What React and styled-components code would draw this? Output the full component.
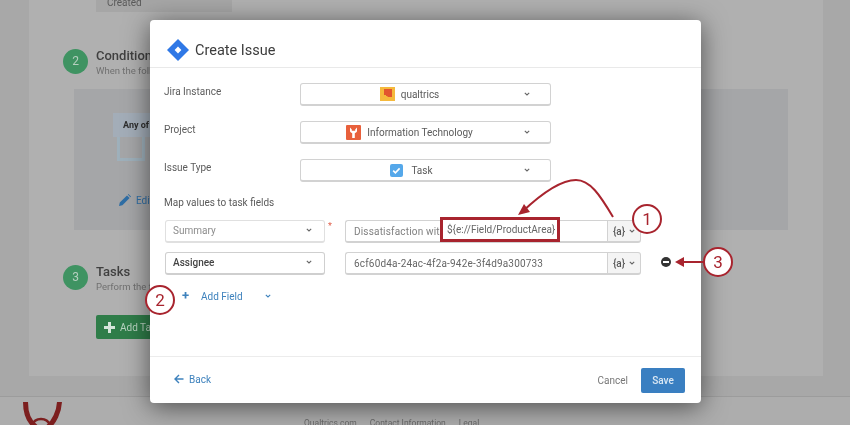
import React from "react";
import styled, { createGlobalStyle } from "styled-components";

const Global = createGlobalStyle`
  html, body { margin: 0; padding: 0; background: #a7a7a7; }
  * { box-sizing: border-box; }
  body { font-family: Roboto, "Liberation Sans", sans-serif; }
`;

const Page = styled.div`
  position: relative; width: 850px; height: 425px; overflow: hidden; background: #a8a8a8;
  filter: blur(0.5px);
`;
const Panel = styled.main`
  width: 794px; height: 376px; margin-left: 29px; padding: 0 35px 0 34px; background: #b0b0b0;
  display: flex; flex-direction: column;
`;
const CreatedBox = styled.div`
  width: 136px; height: 12px; margin-left: 33px; background: #a6a6a6; color: #5a5a5a;
  font-size: 10px; line-height: 5px; padding-left: 11px; overflow: hidden;
`;
const StepRow = styled.div`
  display: flex; gap: 8px; align-items: center; height: 26px; margin-top: ${p => p.$top}px;
`;
const StepCircle = styled.div`
  width: 25px; height: 25px; border-radius: 50%; background: #3f9362; color: #b6cfbf;
  font-size: 12px; display: flex; align-items: center; justify-content: center;
`;
const StepText = styled.div`
  display: flex; flex-direction: column; gap: 2px; padding-top: 4px; width: 54px;
  overflow: hidden; white-space: nowrap;
`;
const StepTitle = styled.div`font-size: 13px; font-weight: 500; line-height: 14px; color: #404040;`;
const StepSub = styled.div`font-size: 9.5px; line-height: 12px; color: #707070;`;
const ConditionBox = styled.div`
  width: 714px; height: 141px; margin: 15px 0 0 11px; padding: 24px 0 0 39px; background: #a5a6a8;
`;
const LogicHead = styled.div`
  width: 120px; height: 24px; padding-left: 10px; background: #a3adb8; color: #2e2e2e;
  font-size: 9px; font-weight: 700; line-height: 24px;
`;
const LogicTree = styled.div`
  width: 28px; height: 24px; margin-left: 4px; border: 3px solid #9eb0bb; border-top: 0;
`;
const EditLink = styled.div`
  display: flex; align-items: center; gap: 5px; margin: 33px 0 0 6px; color: #2f6ea5; font-size: 10px;
`;
const AddTask = styled.div`
  width: 90px; height: 24px; margin: 25px 0 0 33px; padding-left: 8px; border-radius: 2px;
  display: flex; align-items: center; gap: 5px; background: #2f7d49; color: #b9d3c1; font-size: 10px;
`;
const FooterBar = styled.footer`
  height: 29px; margin-top: 20px; border-top: 1px solid #9c9c9c; background: #adadad;
  position: relative; padding: 21px 0 0 304px; display: flex; gap: 13px;
  color: #6a6a6a; font-size: 8.5px;
`;
const FooterLogo = styled.svg`position: absolute; left: 21px; top: 5px;`;

const Modal = styled.section`
  position: absolute; left: 150px; top: 20px; width: 551px; height: 383px;
  background: #fff; border-radius: 4px; box-shadow: 0 4px 26px rgba(0,0,0,.55);
  display: flex; flex-direction: column; color: #555;
`;
const ModalHead = styled.header`
  height: 48px; flex: none; padding: 13px 0 0 16px; border-bottom: 1px solid #e9e9e9;
  display: flex; align-items: center; gap: 5px;
`;
const ModalTitle = styled.h1`margin: 0; font-size: 14.5px; font-weight: 400; color: #3c3c3c;`;
const ModalBody = styled.div`flex: 1; padding: 15px 0 0 14px; position: relative;`;
const ConfigRow = styled.div`
  display: grid; grid-template-columns: 136px 251px; height: 23px; margin-bottom: 15px;
`;
const FieldLabel = styled.div`font-size: 10px; line-height: 17px; color: #5c5c5c;`;
const baseControl = `
  background: #fff; border: 1px solid #d2d2d2; border-bottom-width: 2px; border-radius: 3px;
  font-size: 10px; color: #5a5a5a; display: flex; align-items: center;
`;
const Select = styled.div`
  ${baseControl} position: relative; justify-content: center; gap: ${p => p.$gap || 6}px; padding-right: ${p => p.$pr}px;
`;
const Chevron = styled.svg`
  flex: none; ${p => p.$abs ? `position: absolute; right: ${p.$abs}px; top: 50%; margin-top: -2px;` : ""}
`;
const MapTitle = styled.div`font-size: 10px; line-height: 12px; color: #5a5a5a; margin: 0 0 11px;`;
const MapRow = styled.div`
  display: flex; height: 23px; margin-bottom: ${p => p.$mb || 0}px; align-items: stretch;
`;
const FieldSelect = styled.div`
  ${baseControl} width: 160px; padding: 0 12px 2px 7px; margin-left: 1px; justify-content: space-between;
  color: ${p => p.$muted ? "#8c8c8c" : "#444"}; font-weight: ${p => p.$muted ? 400 : 500};
  border-color: ${p => p.$muted ? "#e0e0e0" : "#cfcfcf"};
`;
const Required = styled.span`width: 20px; color: #e0604c; font-size: 9px; padding-left: 3px; line-height: 12px;`;
const ValueInput = styled.div`
  ${baseControl} width: 262px; padding: 0 8px; border-radius: 3px 0 0 3px; border-right: 0;
  color: ${p => p.$muted ? "#808080" : "#666"}; letter-spacing: .18px; white-space: nowrap;
`;
const PipeButton = styled.div`
  ${baseControl} width: 34px; justify-content: center; gap: 4px; background: #f4f4f4;
  border-radius: 0 3px 3px 0; color: #555; font-weight: 500; font-size: 10px;
`;
const Removal = styled.div`
  width: 10px; height: 10px; margin: 5px 0 0 20px; border-radius: 50%; background: #333;
  display: flex; align-items: center; justify-content: center;
  &::after { content: ""; width: 6px; height: 2px; background: #fff; }
`;
const AddFieldRow = styled.div`
  display: flex; align-items: center; height: 14px; margin: 14px 0 0 17px; color: #3e82bd; font-size: 10px;
`;
const Plus = styled.span`width: 20px; padding-left: 1px; font-size: 13px; font-weight: 700; line-height: 14px;`;
const AddText = styled.span`width: 64px;`;
const ModalFoot = styled.footer`
  height: 47px; flex: none; border-top: 1px solid #ececec; padding: 0 16px 0 24px;
  display: flex; align-items: center; gap: 13px;
`;
const BackLink = styled.div`
  display: flex; align-items: center; gap: 5px; margin: 0 auto 2px 0; color: #3e82bd; font-size: 10px;
`;
const Cancel = styled.span`font-size: 10px; color: #777;`;
const SaveButton = styled.button`
  width: 44px; height: 25px; border: 0; border-radius: 2px; background: #3a7fc1; color: #dbe8f4;
  font: 500 10px Roboto, sans-serif; padding: 0;
`;

const Highlight = styled.div`
  position: absolute; left: 440px; top: 217px; width: 120px; height: 25px; padding-left: 4px;
  border: 3px solid #a8242e; background: #fff; color: #666; font-size: 10px; line-height: 20px;
  white-space: nowrap;
`;
const Callout = styled.div`
  position: absolute; left: ${p => p.$x - 15}px; top: ${p => p.$y - 15}px; width: 30px; height: 30px;
  border-radius: 50%; border: 2.5px solid #a8242e; background: #fff; color: #a8242e;
  font-size: 17px; display: flex; align-items: center; justify-content: center;
`;
const ArrowLayer = styled.svg`position: absolute; left: 0; top: 0; pointer-events: none;`;

const Chev = ({ abs, color = "#666" }) => (
  <Chevron $abs={abs} width="6" height="4" viewBox="0 0 6 4">
    <path d="M.8.8L3 3l2.2-2.2" fill="none" stroke={color} strokeWidth="1.1" />
  </Chevron>
);

export default function App() {
  return (
    <Page>
      <Global />
      <Panel>
        <CreatedBox>Created</CreatedBox>
        <StepRow $top={36}>
          <StepCircle>2</StepCircle>
          <StepText><StepTitle>Conditions</StepTitle><StepSub>When the following</StepSub></StepText>
        </StepRow>
        <ConditionBox>
          <LogicHead>Any of</LogicHead>
          <LogicTree />
          <EditLink>
            <svg width="12" height="12" viewBox="0 0 12 12"><path d="M0 12l.8-3.4L8 1.4l2.6 2.6-7.2 7.2zM8.8.6l.6-.6L12 2.6l-.6.6z" fill="#2f6ea5" /></svg>
            Edit
          </EditLink>
        </ConditionBox>
        <StepRow $top={34}>
          <StepCircle>3</StepCircle>
          <StepText><StepTitle>Tasks</StepTitle><StepSub>Perform the following</StepSub></StepText>
        </StepRow>
        <AddTask>
          <svg width="11" height="11" viewBox="0 0 11 11"><path d="M4 0h3v4h4v3H7v4H4V7H0V4h4z" fill="#d5e5da" /></svg>
          Add Task
        </AddTask>
      </Panel>
      <FooterBar>
        <FooterLogo width="42" height="24" viewBox="0 0 42 24">
          <path d="M4.5 0C4.5 11 8 20 15 25M38.5 0C38 10 33 20 27 25" fill="none" stroke="#7c1f1f" strokeWidth="5" />
          <path d="M11 23C14 15 26 15 29 23" fill="none" stroke="#7c1f1f" strokeWidth="2.5" />
        </FooterLogo>
        <span>Qualtrics.com</span><span>Contact Information</span><span>Legal</span>
      </FooterBar>

      <Modal>
        <ModalHead>
          <svg width="24" height="24" viewBox="0 0 24 24">
            <path d="M12 1l11 11-11 11L1 12z" fill="#2f78e6" />
            <path d="M12 8.6l3.4 3.4-3.4 3.4L8.6 12z" fill="#fff" />
          </svg>
          <ModalTitle>Create Issue</ModalTitle>
        </ModalHead>
        <ModalBody>
          <ConfigRow>
            <FieldLabel>Jira Instance</FieldLabel>
            <Select $pr={32}>
              <svg width="15" height="14" viewBox="0 0 15 14"><rect width="15" height="14" fill="#f5b93c" /><path d="M4 2h8v8H8L7 9H6V8H4z" fill="#e2552e" /></svg>
              qualtrics<Chev abs={20} />
            </Select>
          </ConfigRow>
          <ConfigRow>
            <FieldLabel>Project</FieldLabel>
            <Select $pr={32}>
              <svg width="15" height="15" viewBox="0 0 15 15"><rect width="15" height="15" rx="1" fill="#e8603c" /><path d="M4 2.5V6c0 1 1 1.8 2.2 2.2V13h2.6V8.2C10 7.8 11 7 11 6V2.5L9.2 4.5v1.2H5.8V4.5z" fill="#fff" /></svg>
              Information Technology<Chev abs={20} />
            </Select>
          </ConfigRow>
          <ConfigRow>
            <FieldLabel>Issue Type</FieldLabel>
            <Select $pr={28} $gap={8}>
              <svg width="13" height="13" viewBox="0 0 13 13"><rect width="13" height="13" rx="2" fill="#55a8ea" /><path d="M3.2 6.6l2.2 2.2 4.2-4.4" fill="none" stroke="#fff" strokeWidth="1.6" /></svg>
              Task<Chev abs={20} />
            </Select>
          </ConfigRow>
          <MapTitle>Map values to task fields</MapTitle>
          <MapRow $mb={9}>
            <FieldSelect $muted>Summary<Chev /></FieldSelect>
            <Required>*</Required>
            <ValueInput $muted>Dissatisfaction with</ValueInput>
            <PipeButton>{"{a}"}<Chev /></PipeButton>
          </MapRow>
          <MapRow>
            <FieldSelect>Assignee<Chev /></FieldSelect>
            <Required />
            <ValueInput>6cf60d4a-24ac-4f2a-942e-3f4d9a300733</ValueInput>
            <PipeButton>{"{a}"}<Chev /></PipeButton>
            <Removal />
          </MapRow>
          <AddFieldRow>
            <Plus>+</Plus>
            <AddText>Add Field</AddText>
            <Chev color="#3e82bd" />
          </AddFieldRow>
        </ModalBody>
        <ModalFoot>
          <BackLink>
            <svg width="10" height="10" viewBox="0 0 10 10"><path d="M9.5 5H1.5M5 1L1 5l4 4" fill="none" stroke="#3e82bd" strokeWidth="1.4" /></svg>
            Back
          </BackLink>
          <Cancel>Cancel</Cancel>
          <SaveButton>Save</SaveButton>
        </ModalFoot>
      </Modal>

      <Highlight>{"${e://Field/ProductArea}"}</Highlight>
      <ArrowLayer width="850" height="425" viewBox="0 0 850 425">
        <path d="M613 217C600 195 590 180 576 180C560 180 540 195 522 212" fill="none" stroke="#a8242e" strokeWidth="2" />
        <path d="M518 215l12-3-6-8z" fill="#a8242e" />
        <path d="M704 262H680" stroke="#a8242e" strokeWidth="2" />
        <path d="M675 262l9-5v10z" fill="#a8242e" />
      </ArrowLayer>
      <Callout $x={647} $y={219}>1</Callout>
      <Callout $x={160} $y={300}>2</Callout>
      <Callout $x={718} $y={262}>3</Callout>
    </Page>
  );
}
